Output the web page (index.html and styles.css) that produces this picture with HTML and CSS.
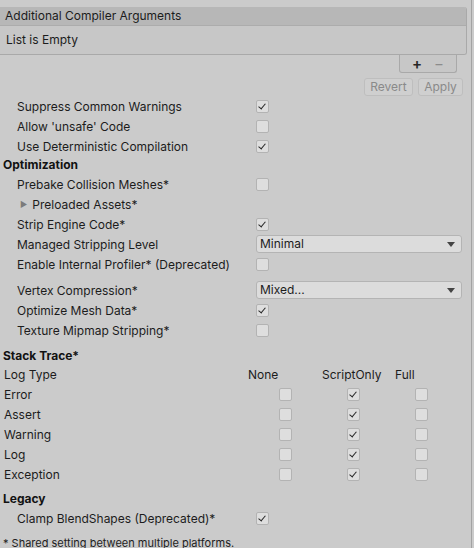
FILE: index.html
```html
<!DOCTYPE html>
<html>
<head>
<meta charset="utf-8">
<link rel="stylesheet" href="styles.css">
</head>
<body>
<div class="panel">
  <div class="list">
    <div class="list-header">Additional Compiler Arguments</div>
    <div class="list-body">List is Empty</div>
  </div>
  <div class="list-footer"><span class="plus">+</span><span class="minus">−</span></div>
  <div class="actions">
    <button class="btn">Revert</button>
    <button class="btn">Apply</button>
  </div>

  <div class="row"><span class="label">Suppress Common Warnings</span><span class="cb on"></span></div>
  <div class="row"><span class="label">Allow 'unsafe' Code</span><span class="cb"></span></div>
  <div class="row"><span class="label">Use Deterministic Compilation</span><span class="cb on"></span></div>
  <div class="section">Optimization</div>
  <div class="row"><span class="label">Prebake Collision Meshes*</span><span class="cb"></span></div>
  <div class="row"><span class="label fold"><span class="tri">▶</span>Preloaded Assets*</span></div>
  <div class="row"><span class="label">Strip Engine Code*</span><span class="cb on"></span></div>
  <div class="row"><span class="label">Managed Stripping Level</span><span class="dropdown">Minimal<span class="arrow"></span></span></div>
  <div class="row"><span class="label">Enable Internal Profiler* (Deprecated)</span><span class="cb"></span></div>
  <div class="row spaced"><span class="label">Vertex Compression*</span><span class="dropdown">Mixed...<span class="arrow"></span></span></div>
  <div class="row"><span class="label">Optimize Mesh Data*</span><span class="cb on"></span></div>
  <div class="row"><span class="label">Texture Mipmap Stripping*</span><span class="cb"></span></div>

  <div class="section gap">Stack Trace*</div>
  <div class="trow head"><span class="tlabel">Log Type</span><span class="c-none">None</span><span class="c-script">ScriptOnly</span><span class="c-full">Full</span></div>
  <div class="trow"><span class="tlabel">Error</span><span class="cell n"><span class="cb"></span></span><span class="cell s"><span class="cb on"></span></span><span class="cell f"><span class="cb"></span></span></div>
  <div class="trow"><span class="tlabel">Assert</span><span class="cell n"><span class="cb"></span></span><span class="cell s"><span class="cb on"></span></span><span class="cell f"><span class="cb"></span></span></div>
  <div class="trow"><span class="tlabel">Warning</span><span class="cell n"><span class="cb"></span></span><span class="cell s"><span class="cb on"></span></span><span class="cell f"><span class="cb"></span></span></div>
  <div class="trow"><span class="tlabel">Log</span><span class="cell n"><span class="cb"></span></span><span class="cell s"><span class="cb on"></span></span><span class="cell f"><span class="cb"></span></span></div>
  <div class="trow"><span class="tlabel">Exception</span><span class="cell n"><span class="cb"></span></span><span class="cell s"><span class="cb on"></span></span><span class="cell f"><span class="cb"></span></span></div>

  <div class="section gap2">Legacy</div>
  <div class="row"><span class="label">Clamp BlendShapes (Deprecated)*</span><span class="cb on"></span></div>
  <div class="note">* Shared setting between multiple platforms.</div>
</div>
</body>
</html>
```

FILE: styles.css
```css
html, body {
  margin: 0;
  padding: 0;
  background: #cbcbcb;
  height: 100%;
  overflow: hidden;
}
body {
  font-family: Inter, "Noto Sans", sans-serif;
  font-size: 12px;
  color: #1c1c1c;
}
.panel {
  width: 472px;
  height: 548px;
  border-right: 1px solid #a3a3a3;
  box-sizing: border-box;
  padding-top: 7px;
}
.list {
  width: 467px;
  border-right: 1px solid #a9a9a9;
  border-bottom: 1px solid #a9a9a9;
  border-radius: 0 3px 3px 0;
  box-sizing: border-box;
  overflow: hidden;
}
.list-header {
  height: 18px;
  line-height: 18px;
  background: #b7b7b7;
  padding-left: 5px;
  border-bottom: 1px solid #acacac;
}
.list-body {
  height: 28px;
  line-height: 28px;
  background: #c7c7c7;
  padding-left: 6px;
}
.list-footer {
  margin-left: 399px;
  width: 58px;
  height: 18px;
  box-sizing: border-box;
  background: #c7c7c7;
  border: 1px solid #a9a9a9;
  border-top: none;
  border-radius: 0 0 3px 3px;
  display: flex;
  align-items: center;
  justify-content: space-around;
  padding: 0 6px;
  font-size: 15px;
  line-height: 16px;
}
.plus { color: #262626; font-weight: 600; }
.minus { color: #8c8c8c; }
.actions {
  display: flex;
  justify-content: flex-end;
  gap: 5px;
  padding-right: 8px;
  margin-top: 5px;
}
.btn {
  font-family: inherit;
  font-size: 12px;
  color: #8a8a8a;
  background: #cfcfcf;
  border: 1px solid #bebebe;
  border-radius: 3px;
  height: 18px;
  padding: 0 4px;
  line-height: 16px;
  margin: 0;
}
.btn:first-child { width: 49px; }
.btn:last-child { width: 45px; }
.row {
  height: 20px;
  display: flex;
  align-items: center;
}
.row.spaced { margin-top: 6px; }
.label {
  width: 239px;
  padding-left: 17px;
  white-space: nowrap;
  flex: none;
}
.fold { display: flex; align-items: center; }
.tri {
  font-size: 8px;
  color: #7b7b7b;
  margin-left: 3px;
  margin-right: 5px;
}
.section {
  height: 18px;
  line-height: 18px;
  font-weight: 700;
  padding-left: 3px;
  color: #121212;
}
.section.gap { margin-top: 7px; }
.section.gap2 { margin-top: 6px; }
.cb {
  display: inline-block;
  width: 13px;
  height: 13px;
  box-sizing: border-box;
  background: #dedede;
  border: 1px solid #b3b3b3;
  border-radius: 2px;
  flex: none;
  position: relative;
}
.cb.on::after {
  content: "";
  position: absolute;
  left: 3px;
  top: 1px;
  width: 3px;
  height: 6px;
  border-right: 1.6px solid #262626;
  border-bottom: 1.6px solid #262626;
  transform: rotate(40deg);
}
.dropdown {
  width: 206px;
  height: 18px;
  box-sizing: border-box;
  background: #dcdcdc;
  border: 1px solid #b4b4b4;
  border-radius: 3px;
  display: flex;
  align-items: center;
  justify-content: space-between;
  padding: 0 6px 0 3px;
  line-height: 16px;
}
.arrow {
  width: 0;
  height: 0;
  border-left: 4px solid transparent;
  border-right: 4px solid transparent;
  border-top: 5px solid #444;
}
.trow {
  height: 20px;
  display: grid;
  grid-template-columns: 248px 74px 73px 1fr;
  align-items: center;
}
.trow.head { height: 19px; }
.tlabel { padding-left: 4px; }
.trow .cell { display: flex; }
.cell.n { padding-left: 31px; }
.cell.s { padding-left: 25px; }
.cell.f { padding-left: 20px; }
.note {
  margin-top: 8px;
  padding-left: 3px;
  font-size: 11px;
  color: #1e1e1e;
}
```
